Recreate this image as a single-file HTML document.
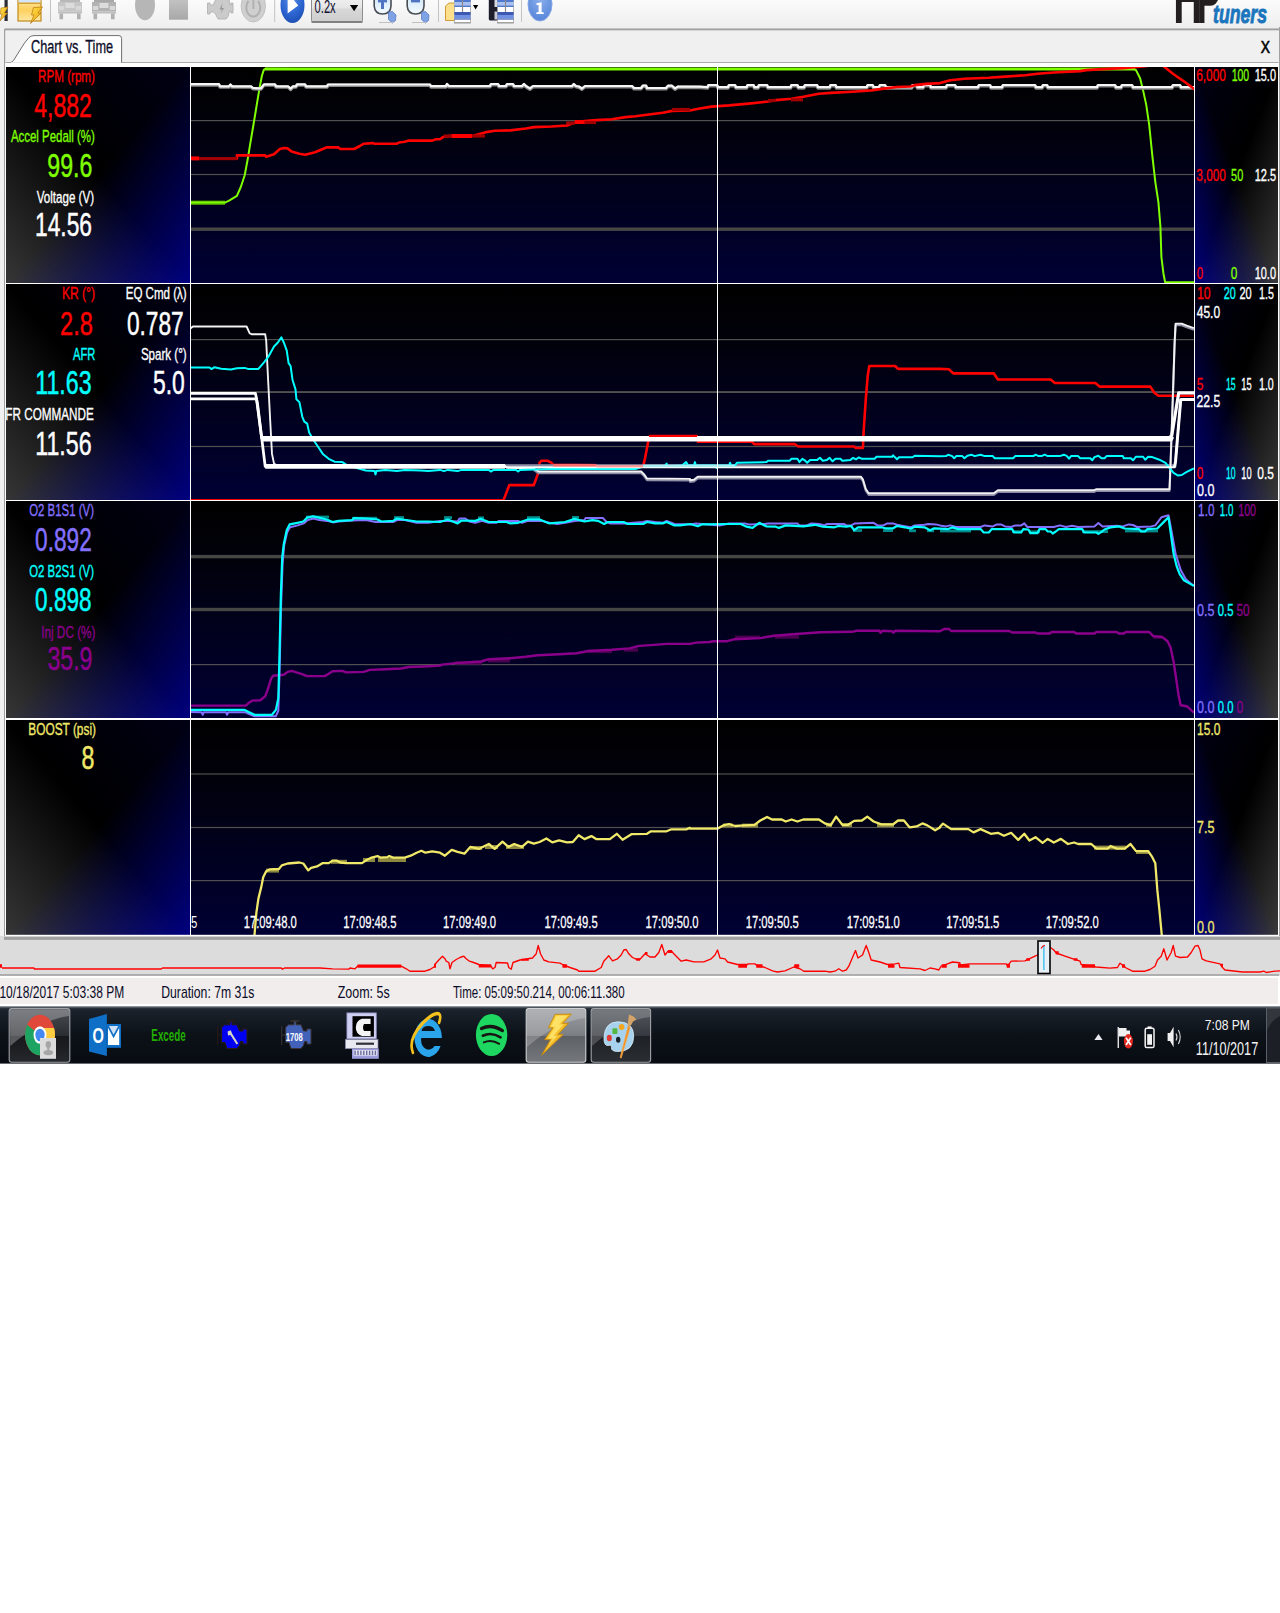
<!DOCTYPE html>
<html lang="en"><head><meta charset="utf-8"><title>HP Tuners VCM Scanner - Chart vs. Time</title>
<style>html,body{margin:0;padding:0;background:#fff}body{width:1280px;height:1613px;overflow:hidden}svg{display:block;font-family:"Liberation Sans",Arial,sans-serif}text{white-space:pre}</style></head>
<body>
<svg width="1280" height="1613" viewBox="0 0 1280 1613">
<defs>
<linearGradient id="gp" x1="0" y1="0" x2="0" y2="1"><stop offset="0" stop-color="#000"/><stop offset="0.25" stop-color="#01010a"/><stop offset="1" stop-color="#000034"/></linearGradient>
<linearGradient id="hb" x1="0" y1="0" x2="1" y2="0"><stop offset="0" stop-color="#343434"/><stop offset="0.35" stop-color="#20203a"/><stop offset="0.7" stop-color="#08085e"/><stop offset="1" stop-color="#000080"/></linearGradient>
<linearGradient id="hb2" x1="1" y1="0" x2="0" y2="0"><stop offset="0" stop-color="#383838"/><stop offset="0.35" stop-color="#20203a"/><stop offset="0.7" stop-color="#08085e"/><stop offset="1" stop-color="#00007c"/></linearGradient>
<linearGradient id="vt" x1="0" y1="0" x2="0" y2="1"><stop offset="0" stop-color="#00000a" stop-opacity="1"/><stop offset="0.5" stop-color="#000008" stop-opacity="0.55"/><stop offset="1" stop-color="#000008" stop-opacity="0"/></linearGradient>
<radialGradient id="cd" cx="0.47" cy="0.42" r="0.66"><stop offset="0" stop-color="#000" stop-opacity="1"/><stop offset="0.18" stop-color="#000" stop-opacity="0.96"/><stop offset="1" stop-color="#000" stop-opacity="0"/></radialGradient>
<radialGradient id="cd2" cx="0.53" cy="0.42" r="0.66"><stop offset="0" stop-color="#000" stop-opacity="1"/><stop offset="0.18" stop-color="#000" stop-opacity="0.96"/><stop offset="1" stop-color="#000" stop-opacity="0"/></radialGradient>
<clipPath id="cp1"><rect x="191" y="67" width="1003" height="216"/></clipPath>
<clipPath id="cp2"><rect x="191" y="284" width="1003" height="216.5"/></clipPath>
<clipPath id="cp3"><rect x="191" y="501" width="1003" height="217"/></clipPath>
<clipPath id="cp4"><rect x="191" y="720" width="1003" height="215.5"/></clipPath>
<clipPath id="cpl"><rect x="6" y="67" width="184" height="869"/></clipPath>
</defs>
<defs>
<linearGradient id="tb" x1="0" y1="0" x2="0" y2="1"><stop offset="0" stop-color="#fbfbfb"/><stop offset="1" stop-color="#eeeeee"/></linearGradient>
<linearGradient id="fold" x1="0" y1="0" x2="0" y2="1"><stop offset="0" stop-color="#ffe9a6"/><stop offset="0.55" stop-color="#ffd15e"/><stop offset="1" stop-color="#ffe7a4"/></linearGradient>
<linearGradient id="bolt" x1="0" y1="0" x2="1" y2="1"><stop offset="0" stop-color="#ffe24a"/><stop offset="1" stop-color="#e89c10"/></linearGradient>
<linearGradient id="gry" x1="0" y1="0" x2="0" y2="1"><stop offset="0" stop-color="#c4c4c4"/><stop offset="1" stop-color="#a8a8a8"/></linearGradient>
<radialGradient id="play" cx="0.45" cy="0.3" r="0.8"><stop offset="0" stop-color="#5a8ee8"/><stop offset="0.6" stop-color="#2a62cf"/><stop offset="1" stop-color="#1b49a8"/></radialGradient>
<linearGradient id="dd" x1="0" y1="0" x2="0" y2="1"><stop offset="0" stop-color="#f2f2f2"/><stop offset="0.45" stop-color="#e6e6e6"/><stop offset="0.5" stop-color="#d8d8d8"/><stop offset="1" stop-color="#cdcdcd"/></linearGradient>
<linearGradient id="glass" x1="0" y1="0" x2="0" y2="1"><stop offset="0" stop-color="#cfe6fb"/><stop offset="1" stop-color="#f4fbff"/></linearGradient>
<radialGradient id="info" cx="0.5" cy="0.3" r="0.8"><stop offset="0" stop-color="#8fb2ee"/><stop offset="1" stop-color="#4f7fd6"/></radialGradient>
<linearGradient id="tk" x1="0" y1="0" x2="0" y2="1"><stop offset="0" stop-color="#3a424c"/><stop offset="0.06" stop-color="#1b222b"/><stop offset="0.5" stop-color="#0c1118"/><stop offset="1" stop-color="#080c12"/></linearGradient>
<linearGradient id="btn" x1="0" y1="0" x2="0" y2="1"><stop offset="0" stop-color="#4a4e54"/><stop offset="0.5" stop-color="#2a2d31"/><stop offset="0.52" stop-color="#16181b"/><stop offset="1" stop-color="#25282c"/></linearGradient>
<linearGradient id="btn2" x1="0" y1="0" x2="0" y2="1"><stop offset="0" stop-color="#9a9da2"/><stop offset="0.5" stop-color="#7c7f84"/><stop offset="0.52" stop-color="#5e6166"/><stop offset="1" stop-color="#74777c"/></linearGradient>
<linearGradient id="btn3" x1="0" y1="0" x2="0" y2="1"><stop offset="0" stop-color="#565a60"/><stop offset="0.5" stop-color="#363a40"/><stop offset="0.52" stop-color="#1e2126"/><stop offset="1" stop-color="#2a2d32"/></linearGradient>
<clipPath id="cptb"><rect x="0" y="0" width="1280" height="28"/></clipPath>
</defs>
<rect x="0.00" y="0.00" width="1280.00" height="1613.00" fill="#fff" />
<g id="toolbar"><rect x="0.00" y="0.00" width="1280.00" height="28.50" fill="url(#tb)" />
<g clip-path="url(#cptb)">
<rect x="4.50" y="-2.00" width="3.20" height="23.00" fill="#2c2c34" />
<path d="M1 8 L8 7 L4.5 13 L7.5 13 L0 21 L2 14 L0 14 Z" fill="url(#bolt)" stroke="#b37408" stroke-width="0.6"/>
<rect x="18.00" y="-3.00" width="23.00" height="24.00" fill="url(#fold)" stroke="#c08a1c" stroke-width="1.2"/>
<rect x="18.60" y="-3.00" width="21.80" height="5.60" fill="#d6e6fa" />
<rect x="18.60" y="2.60" width="21.80" height="1.20" fill="#c89428" />
<path d="M33.5 7.5 L42.5 7 L38 13 L41 13 L30.5 23.5 L34 15 L31.5 15 Z" fill="url(#bolt)" stroke="#b37408" stroke-width="0.7"/>
<rect x="50.00" y="0.00" width="1.00" height="22.00" fill="#c4c4c4" />
<rect x="60.00" y="-2.00" width="20.00" height="4.00" fill="#b8b8b8" />
<rect x="58.00" y="2.00" width="24.00" height="9.50" fill="#c6c6c6" />
<rect x="65.50" y="3.00" width="9.00" height="5.00" fill="#dcdcdc" />
<rect x="58.80" y="6.00" width="5.50" height="4.00" fill="#d8d8d8" />
<rect x="75.70" y="6.00" width="5.50" height="4.00" fill="#d8d8d8" />
<rect x="58.00" y="11.50" width="24.00" height="2.00" fill="#bdbdbd" />
<rect x="59.50" y="13.50" width="3.60" height="5.80" fill="#b0b0b0" />
<rect x="77.00" y="13.50" width="3.60" height="5.80" fill="#b0b0b0" />
<rect x="94.00" y="-2.00" width="20.00" height="4.00" fill="#a8a8a8" />
<rect x="92.00" y="2.00" width="24.00" height="9.50" fill="#b2b2b2" />
<rect x="99.50" y="3.00" width="9.00" height="5.00" fill="#dcdcdc" />
<rect x="92.80" y="6.00" width="5.50" height="4.00" fill="#d8d8d8" />
<rect x="109.70" y="6.00" width="5.50" height="4.00" fill="#d8d8d8" />
<rect x="92.00" y="11.50" width="24.00" height="2.00" fill="#bdbdbd" />
<rect x="93.50" y="13.50" width="3.60" height="5.80" fill="#b0b0b0" />
<rect x="111.00" y="13.50" width="3.60" height="5.80" fill="#b0b0b0" />
<ellipse cx="145" cy="5" rx="10" ry="15.3" fill="#b6b6b6"/>
<rect x="169.00" y="-2.00" width="19.00" height="21.70" fill="url(#gry)" />
<path d="M207.5 3 L210 3 L210 5 L213 5 L216 -1 L229 -1 L230 5 L231 5 L231 3 L233 3 L233 13 L231 13 L231 11 L229.5 11 L228 16.5 L226 19 L218 19 L215.5 14 L213.5 12 L210 12 L210 14 L207.5 14 Z" fill="#cbcbcb" stroke="#adadad" stroke-width="0.8"/>
<path d="M222.5 3 L219.5 9.5 L222 9.5 L220.5 14 L224 8 L221.8 8 Z" fill="#9a9a9a"/>
<ellipse cx="253.3" cy="6" rx="12.2" ry="16" fill="#cfcfcf" stroke="#bdbdbd" stroke-width="0.8"/>
<path d="M248.5 1 A7 9 0 1 0 258 1" fill="none" stroke="#b0b0b0" stroke-width="2"/>
<rect x="252.50" y="-3.00" width="1.80" height="12.00" fill="#b0b0b0" />
<rect x="274.20" y="0.00" width="1.00" height="22.00" fill="#c4c4c4" />
<ellipse cx="292.5" cy="5" rx="12" ry="18" fill="url(#play)"/>
<path d="M287.6 -8 L298.2 5.5 L287.6 13.5 Z" fill="#fff"/>
<rect x="311.50" y="-4.00" width="51.00" height="26.00" fill="url(#dd)" stroke="#8e8e8e" stroke-width="1" rx="1.5"/>
<rect x="311.50" y="21.30" width="51.00" height="1.40" fill="#6a6a6a" />
<text transform="translate(314.55 12.50) scale(0.6230 1)" font-size="17.97" fill="#101030">0.2x</text>
<path d="M350 5 L358.2 5 L354.1 11.2 Z" fill="#000"/>
<path d="M374.2 -4 L374.2 6 Q374.8 14 382.6 14 Q390.6 14 391.0 6 L391.0 -4 Z" fill="url(#glass)" stroke="#4a4e54" stroke-width="1.6"/>
<rect x="378.00" y="-2.00" width="9.00" height="4.40" fill="#4f74c4" />
<rect x="381.00" y="2.00" width="3.00" height="7.00" fill="#4f74c4" />
<path d="M388.5 12 L392.5 11.5 L396.0 15 L395.5 20.5 L392.5 23 L388.5 19.5 Z" fill="#7fa2e4" stroke="#4f74c4" stroke-width="0.7"/>
<rect x="379.00" y="22.00" width="15.00" height="1.00" fill="#c0c0c0" />
<path d="M407.2 -4 L407.2 6 Q407.8 14 415.6 14 Q423.6 14 424.0 6 L424.0 -4 Z" fill="url(#glass)" stroke="#4a4e54" stroke-width="1.6"/>
<rect x="411.00" y="-2.00" width="9.00" height="4.40" fill="#4f74c4" />
<path d="M421.5 12 L425.5 11.5 L429.0 15 L428.5 20.5 L425.5 23 L421.5 19.5 Z" fill="#7fa2e4" stroke="#4f74c4" stroke-width="0.7"/>
<rect x="412.00" y="22.00" width="15.00" height="1.00" fill="#c0c0c0" />
<rect x="438.00" y="0.00" width="1.00" height="22.00" fill="#c4c4c4" />
<path d="M445.5 20.5 L445.5 6 L449 3 L456 3 L456 20.5 Z" fill="#ffdf8c" stroke="#c89428" stroke-width="0.9"/>
<rect x="454.40" y="-3.00" width="16.20" height="26.00" fill="#fff" stroke="#8a8a92" stroke-width="0.6"/>
<rect x="454.40" y="-3.00" width="16.20" height="5.00" fill="#4f78d0" />
<rect x="454.40" y="2.00" width="16.20" height="3.40" fill="#a9c0ee" />
<rect x="454.40" y="5.40" width="16.20" height="1.60" fill="#4f78d0" />
<rect x="454.40" y="12.00" width="16.20" height="3.00" fill="#3c58b0" />
<rect x="454.40" y="15.00" width="16.20" height="3.60" fill="#6f8fe0" />
<rect x="454.40" y="18.60" width="16.20" height="1.00" fill="#3c58b0" />
<rect x="461.90" y="-3.00" width="1.20" height="15.00" fill="#8a8a92" />
<rect x="454.40" y="22.30" width="16.20" height="0.90" fill="#8a8a8a" />
<path d="M473 5 L478.2 5 L475.6 9.6 Z" fill="#000"/>
<rect x="488.80" y="-3.00" width="9.00" height="23.50" fill="#1c1e2c" rx="1.5"/>
<rect x="494.50" y="-2.00" width="3.00" height="9.00" fill="#d8d8e0" />
<rect x="494.50" y="11.50" width="3.00" height="8.00" fill="#c8c8d4" />
<rect x="497.40" y="-3.00" width="16.20" height="26.00" fill="#fff" stroke="#8a8a92" stroke-width="0.6"/>
<rect x="497.40" y="-3.00" width="16.20" height="5.00" fill="#4f78d0" />
<rect x="497.40" y="2.00" width="16.20" height="3.40" fill="#a9c0ee" />
<rect x="497.40" y="5.40" width="16.20" height="1.60" fill="#4f78d0" />
<rect x="497.40" y="12.00" width="16.20" height="3.00" fill="#3c58b0" />
<rect x="497.40" y="15.00" width="16.20" height="3.60" fill="#6f8fe0" />
<rect x="497.40" y="18.60" width="16.20" height="1.00" fill="#3c58b0" />
<rect x="504.90" y="-3.00" width="1.20" height="15.00" fill="#8a8a92" />
<rect x="497.40" y="22.30" width="16.20" height="0.90" fill="#8a8a8a" />
<rect x="521.00" y="0.00" width="1.00" height="22.00" fill="#c4c4c4" />
<ellipse cx="540" cy="4" rx="12" ry="17" fill="url(#info)" stroke="#86a6e6" stroke-width="1"/>
<path d="M536.5 3.2 L541.6 2.2 L541.6 12 L543.8 12.6 L543.8 14 L536.3 14 L536.3 12.6 L538.6 12 L538.6 5 L536.5 5 Z" fill="#fff"/>
<text transform="translate(1173.29 23.40) scale(0.5657 1)" font-size="71.01" fill="#231f20" font-weight="bold">H</text>
<text transform="translate(1196.83 23.40) scale(0.5139 1)" font-size="71.01" fill="#231f20" font-weight="bold">P</text>
<text transform="translate(1213.00 23.00) scale(0.6790 1)" font-size="26.09" fill="#1b75bc" font-weight="bold" font-style="italic" stroke="#1b75bc" stroke-width="0.9">tuners</text>
</g>
<rect x="4.40" y="28.40" width="1276.00" height="2.20" fill="#a0a0a0" /></g>
<g id="tabs"><rect x="0.00" y="30.60" width="1280.00" height="36.00" fill="#f0f0f0" />
<rect x="0.00" y="28.40" width="4.40" height="911.00" fill="#f0f0f0" />
<rect x="4.00" y="29.00" width="1.20" height="910.00" fill="#a0a0a0" />
<rect x="1279.00" y="27.00" width="1.00" height="913.00" fill="#a0a0a0" />
<rect x="5.50" y="62.80" width="1273.10" height="4.20" fill="#fff" />
<rect x="5.50" y="62.00" width="1273.10" height="0.90" fill="#8c8c8c" />
<path d="M10.5 62.9 L13.5 60.5 L24.5 43 L29 37.6 Q31 35.6 34 35.6 L119 35.6 Q121.6 35.6 121.6 38.5 L121.6 62.9 Z" fill="#fff" stroke="#6e6e6e" stroke-width="1"/>
<rect x="11.00" y="62.30" width="110.00" height="1.60" fill="#fff" />
<text transform="translate(30.96 52.50) scale(0.7214 1)" font-size="17.68" fill="#0c0c28" stroke="#0c0c28" stroke-width="0.3">Chart vs. Time</text>
<text transform="translate(1260.85 52.70) scale(0.8251 1)" font-size="16.81" fill="#000" stroke="#000" stroke-width="0.6">X</text></g>
<g id="chart">
<defs><linearGradient id="pgBBL363636100" x1="0" y1="1" x2="0.8" y2="0.6"><stop offset="0" stop-color="#363636" stop-opacity="1"/><stop offset="1" stop-color="#363636" stop-opacity="0"/></linearGradient><linearGradient id="pgLBL363636100" x1="0" y1="1" x2="0.4" y2="0.2"><stop offset="0" stop-color="#363636" stop-opacity="1"/><stop offset="1" stop-color="#363636" stop-opacity="0"/></linearGradient><linearGradient id="pgTTR000014100" x1="1" y1="0" x2="0.2" y2="0.4"><stop offset="0" stop-color="#000014" stop-opacity="1"/><stop offset="1" stop-color="#000014" stop-opacity="0"/></linearGradient><linearGradient id="pgRTR000014100" x1="1" y1="0" x2="0.6" y2="0.8"><stop offset="0" stop-color="#000014" stop-opacity="1"/><stop offset="1" stop-color="#000014" stop-opacity="0"/></linearGradient><linearGradient id="pgRBR0000ff50" x1="1" y1="1" x2="0.6" y2="0.2"><stop offset="0" stop-color="#0000ff" stop-opacity="0.5"/><stop offset="1" stop-color="#0000ff" stop-opacity="0"/></linearGradient><linearGradient id="pgBBR0000ff50" x1="1" y1="1" x2="0.2" y2="0.6"><stop offset="0" stop-color="#0000ff" stop-opacity="0.5"/><stop offset="1" stop-color="#0000ff" stop-opacity="0"/></linearGradient><linearGradient id="pgRBR3a3a3a100" x1="1" y1="1" x2="0.6" y2="0.2"><stop offset="0" stop-color="#3a3a3a" stop-opacity="1"/><stop offset="1" stop-color="#3a3a3a" stop-opacity="0"/></linearGradient><linearGradient id="pgBBR3a3a3a100" x1="1" y1="1" x2="0.2" y2="0.6"><stop offset="0" stop-color="#3a3a3a" stop-opacity="1"/><stop offset="1" stop-color="#3a3a3a" stop-opacity="0"/></linearGradient><linearGradient id="pgTTL000014100" x1="0" y1="0" x2="0.8" y2="0.4"><stop offset="0" stop-color="#000014" stop-opacity="1"/><stop offset="1" stop-color="#000014" stop-opacity="0"/></linearGradient><linearGradient id="pgLTL000014100" x1="0" y1="0" x2="0.4" y2="0.8"><stop offset="0" stop-color="#000014" stop-opacity="1"/><stop offset="1" stop-color="#000014" stop-opacity="0"/></linearGradient><linearGradient id="pgBBL0000ff48" x1="0" y1="1" x2="0.8" y2="0.6"><stop offset="0" stop-color="#0000ff" stop-opacity="0.48"/><stop offset="1" stop-color="#0000ff" stop-opacity="0"/></linearGradient><linearGradient id="pgLBL0000ff48" x1="0" y1="1" x2="0.4" y2="0.2"><stop offset="0" stop-color="#0000ff" stop-opacity="0.48"/><stop offset="1" stop-color="#0000ff" stop-opacity="0"/></linearGradient></defs>
<rect x="5.20" y="62.80" width="1273.80" height="874.00" fill="#fff" />
<rect x="6.00" y="67.00" width="1272.00" height="869.00" fill="#000" />
<rect x="6.00" y="67.00" width="184.00" height="216.00" fill="#000" />
<polygon points="98.00,175.00 6.00,283.00 190.00,283.00" fill="url(#pgBBL363636100)" shape-rendering="crispEdges"/>
<polygon points="98.00,175.00 6.00,67.00 6.00,283.00" fill="url(#pgLBL363636100)" shape-rendering="crispEdges"/>
<polygon points="98.00,175.00 6.00,67.00 190.00,67.00" fill="url(#pgTTR000014100)" shape-rendering="crispEdges"/>
<polygon points="98.00,175.00 190.00,67.00 190.00,283.00" fill="url(#pgRTR000014100)" shape-rendering="crispEdges"/>
<polygon points="98.00,175.00 190.00,67.00 190.00,283.00" fill="url(#pgRBR0000ff50)" shape-rendering="crispEdges"/>
<polygon points="98.00,175.00 6.00,283.00 190.00,283.00" fill="url(#pgBBR0000ff50)" shape-rendering="crispEdges"/>
<rect x="191.00" y="67.00" width="1003.00" height="216.00" fill="url(#gp)" />
<rect x="1195.00" y="67.00" width="83.00" height="216.00" fill="#000" />
<polygon points="1236.50,175.00 1278.00,67.00 1278.00,283.00" fill="url(#pgRBR3a3a3a100)" shape-rendering="crispEdges"/>
<polygon points="1236.50,175.00 1195.00,283.00 1278.00,283.00" fill="url(#pgBBR3a3a3a100)" shape-rendering="crispEdges"/>
<polygon points="1236.50,175.00 1195.00,67.00 1278.00,67.00" fill="url(#pgTTL000014100)" shape-rendering="crispEdges"/>
<polygon points="1236.50,175.00 1195.00,67.00 1195.00,283.00" fill="url(#pgLTL000014100)" shape-rendering="crispEdges"/>
<polygon points="1236.50,175.00 1195.00,283.00 1278.00,283.00" fill="url(#pgBBL0000ff48)" shape-rendering="crispEdges"/>
<polygon points="1236.50,175.00 1195.00,67.00 1195.00,283.00" fill="url(#pgLBL0000ff48)" shape-rendering="crispEdges"/>
<rect x="6.00" y="284.00" width="184.00" height="216.00" fill="#000" />
<polygon points="98.00,392.00 6.00,500.00 190.00,500.00" fill="url(#pgBBL363636100)" shape-rendering="crispEdges"/>
<polygon points="98.00,392.00 6.00,284.00 6.00,500.00" fill="url(#pgLBL363636100)" shape-rendering="crispEdges"/>
<polygon points="98.00,392.00 6.00,284.00 190.00,284.00" fill="url(#pgTTR000014100)" shape-rendering="crispEdges"/>
<polygon points="98.00,392.00 190.00,284.00 190.00,500.00" fill="url(#pgRTR000014100)" shape-rendering="crispEdges"/>
<polygon points="98.00,392.00 190.00,284.00 190.00,500.00" fill="url(#pgRBR0000ff50)" shape-rendering="crispEdges"/>
<polygon points="98.00,392.00 6.00,500.00 190.00,500.00" fill="url(#pgBBR0000ff50)" shape-rendering="crispEdges"/>
<rect x="191.00" y="284.00" width="1003.00" height="216.00" fill="url(#gp)" />
<rect x="1195.00" y="284.00" width="83.00" height="216.00" fill="#000" />
<polygon points="1236.50,392.00 1278.00,284.00 1278.00,500.00" fill="url(#pgRBR3a3a3a100)" shape-rendering="crispEdges"/>
<polygon points="1236.50,392.00 1195.00,500.00 1278.00,500.00" fill="url(#pgBBR3a3a3a100)" shape-rendering="crispEdges"/>
<polygon points="1236.50,392.00 1195.00,284.00 1278.00,284.00" fill="url(#pgTTL000014100)" shape-rendering="crispEdges"/>
<polygon points="1236.50,392.00 1195.00,284.00 1195.00,500.00" fill="url(#pgLTL000014100)" shape-rendering="crispEdges"/>
<polygon points="1236.50,392.00 1195.00,500.00 1278.00,500.00" fill="url(#pgBBL0000ff48)" shape-rendering="crispEdges"/>
<polygon points="1236.50,392.00 1195.00,284.00 1195.00,500.00" fill="url(#pgLBL0000ff48)" shape-rendering="crispEdges"/>
<rect x="6.00" y="501.00" width="184.00" height="217.00" fill="#000" />
<polygon points="98.00,609.50 6.00,718.00 190.00,718.00" fill="url(#pgBBL363636100)" shape-rendering="crispEdges"/>
<polygon points="98.00,609.50 6.00,501.00 6.00,718.00" fill="url(#pgLBL363636100)" shape-rendering="crispEdges"/>
<polygon points="98.00,609.50 6.00,501.00 190.00,501.00" fill="url(#pgTTR000014100)" shape-rendering="crispEdges"/>
<polygon points="98.00,609.50 190.00,501.00 190.00,718.00" fill="url(#pgRTR000014100)" shape-rendering="crispEdges"/>
<polygon points="98.00,609.50 190.00,501.00 190.00,718.00" fill="url(#pgRBR0000ff50)" shape-rendering="crispEdges"/>
<polygon points="98.00,609.50 6.00,718.00 190.00,718.00" fill="url(#pgBBR0000ff50)" shape-rendering="crispEdges"/>
<rect x="191.00" y="501.00" width="1003.00" height="217.00" fill="url(#gp)" />
<rect x="1195.00" y="501.00" width="83.00" height="217.00" fill="#000" />
<polygon points="1236.50,609.50 1278.00,501.00 1278.00,718.00" fill="url(#pgRBR3a3a3a100)" shape-rendering="crispEdges"/>
<polygon points="1236.50,609.50 1195.00,718.00 1278.00,718.00" fill="url(#pgBBR3a3a3a100)" shape-rendering="crispEdges"/>
<polygon points="1236.50,609.50 1195.00,501.00 1278.00,501.00" fill="url(#pgTTL000014100)" shape-rendering="crispEdges"/>
<polygon points="1236.50,609.50 1195.00,501.00 1195.00,718.00" fill="url(#pgLTL000014100)" shape-rendering="crispEdges"/>
<polygon points="1236.50,609.50 1195.00,718.00 1278.00,718.00" fill="url(#pgBBL0000ff48)" shape-rendering="crispEdges"/>
<polygon points="1236.50,609.50 1195.00,501.00 1195.00,718.00" fill="url(#pgLBL0000ff48)" shape-rendering="crispEdges"/>
<rect x="6.00" y="720.00" width="184.00" height="215.00" fill="#000" />
<polygon points="98.00,827.50 6.00,935.00 190.00,935.00" fill="url(#pgBBL363636100)" shape-rendering="crispEdges"/>
<polygon points="98.00,827.50 6.00,720.00 6.00,935.00" fill="url(#pgLBL363636100)" shape-rendering="crispEdges"/>
<polygon points="98.00,827.50 6.00,720.00 190.00,720.00" fill="url(#pgTTR000014100)" shape-rendering="crispEdges"/>
<polygon points="98.00,827.50 190.00,720.00 190.00,935.00" fill="url(#pgRTR000014100)" shape-rendering="crispEdges"/>
<polygon points="98.00,827.50 190.00,720.00 190.00,935.00" fill="url(#pgRBR0000ff50)" shape-rendering="crispEdges"/>
<polygon points="98.00,827.50 6.00,935.00 190.00,935.00" fill="url(#pgBBR0000ff50)" shape-rendering="crispEdges"/>
<rect x="191.00" y="720.00" width="1003.00" height="215.00" fill="url(#gp)" />
<rect x="1195.00" y="720.00" width="83.00" height="215.00" fill="#000" />
<polygon points="1236.50,827.50 1278.00,720.00 1278.00,935.00" fill="url(#pgRBR3a3a3a100)" shape-rendering="crispEdges"/>
<polygon points="1236.50,827.50 1195.00,935.00 1278.00,935.00" fill="url(#pgBBR3a3a3a100)" shape-rendering="crispEdges"/>
<polygon points="1236.50,827.50 1195.00,720.00 1278.00,720.00" fill="url(#pgTTL000014100)" shape-rendering="crispEdges"/>
<polygon points="1236.50,827.50 1195.00,720.00 1195.00,935.00" fill="url(#pgLTL000014100)" shape-rendering="crispEdges"/>
<polygon points="1236.50,827.50 1195.00,935.00 1278.00,935.00" fill="url(#pgBBL0000ff48)" shape-rendering="crispEdges"/>
<polygon points="1236.50,827.50 1195.00,720.00 1195.00,935.00" fill="url(#pgLBL0000ff48)" shape-rendering="crispEdges"/>
<rect x="191.00" y="120.00" width="1003.00" height="1.20" fill="#505050" />
<rect x="191.00" y="173.90" width="1003.00" height="1.20" fill="#505050" />
<rect x="191.00" y="339.00" width="1003.00" height="1.20" fill="#505050" />
<rect x="191.00" y="445.90" width="1003.00" height="1.20" fill="#505050" />
<rect x="191.00" y="664.00" width="1003.00" height="1.20" fill="#505050" />
<rect x="191.00" y="773.40" width="1003.00" height="1.20" fill="#505050" />
<rect x="191.00" y="826.90" width="1003.00" height="1.20" fill="#505050" />
<rect x="191.00" y="880.00" width="1003.00" height="1.20" fill="#505050" />
<rect x="191.00" y="391.20" width="1003.00" height="1.70" fill="#5a5a5a" />
<rect x="191.00" y="227.50" width="1003.00" height="3.40" fill="#464644" />
<rect x="191.00" y="554.90" width="1003.00" height="3.40" fill="#464644" />
<rect x="191.00" y="607.80" width="1003.00" height="3.40" fill="#464644" />
<g clip-path="url(#cp1)">
<rect x="191.00" y="200.60" width="34.00" height="4.30" fill="#4f9c00" />
<rect x="265.00" y="67.20" width="870.00" height="3.60" fill="#4f9c00" />
<polyline points="191.0,202.6 225.0,202.6 229.1,200.7 236.9,195.8 240.8,187.0 244.7,175.3 247.6,159.7 250.5,142.1 253.5,124.5 256.4,107.0 259.3,89.4 261.9,75.7 263.8,69.9 265.4,68.7 300.0,68.9 1134.0,68.9 1136.0,70.1 1140.1,78.2 1143.1,90.4 1146.2,104.6 1149.2,124.9 1152.3,155.4 1155.3,181.8 1158.4,202.1 1160.4,226.5 1161.4,257.0 1163.4,273.2 1165.1,282.2 1166.0,282.2 1194.0,282.2" fill="none" stroke="#7fff00" stroke-width="2.0" stroke-linejoin="round" />
<polyline points="191.0,85.0 219.0,85.0 220.0,87.1 229.0,87.1 230.5,85.3 232.0,87.1 251.0,87.1 253.0,88.8 261.0,89.1 264.0,85.1 275.0,85.1 276.0,87.1 288.0,87.1 290.6,89.4 293.0,87.1 296.0,87.1 297.0,85.1 305.0,85.1 306.0,87.1 327.0,87.1 328.0,85.3 430.0,85.3 431.0,87.0 446.0,87.0 447.0,84.8 449.0,86.8 490.0,86.8 491.0,84.8 498.0,84.8 499.0,86.8 506.0,86.8 507.0,84.8 513.0,84.8 514.0,86.8 522.0,86.8 524.0,84.8 526.0,86.8 530.0,89.2 533.0,86.8 572.0,86.8 573.8,84.8 576.0,86.8 579.0,87.3 582.0,89.3 585.0,86.8 632.0,86.8 634.0,88.8 641.0,88.8 643.0,86.3 646.0,86.3 647.0,88.8 666.0,88.8 668.0,86.5 672.0,86.5 675.0,89.2 678.0,87.3 700.0,87.5 707.5,88.0 708.5,85.8 717.0,85.8 718.0,88.0 728.0,88.0 729.0,85.8 735.0,85.8 736.0,88.0 746.6,88.0 747.6,85.8 753.5,85.8 754.5,88.0 758.0,88.0 759.0,85.8 767.0,85.8 768.0,88.0 790.5,88.0 791.5,85.8 797.4,85.8 798.4,88.0 804.0,88.0 805.0,85.8 817.0,85.8 818.0,88.0 829.6,88.0 830.6,85.8 835.5,85.8 836.5,88.0 866.7,88.0 867.7,85.8 872.6,85.8 873.6,88.0 879.0,88.0 880.0,85.8 885.0,85.8 886.0,88.0 911.6,88.0 912.6,85.8 916.5,85.8 917.5,88.0 923.0,88.0 924.0,85.8 930.0,85.8 931.0,88.0 946.0,88.0 947.0,85.8 955.0,85.8 956.0,88.0 978.0,88.0 979.0,85.8 990.0,85.8 991.0,88.0 1002.0,88.0 1003.0,85.8 1035.0,85.8 1036.0,88.0 1042.0,88.0 1043.0,85.8 1047.0,85.8 1048.0,88.0 1097.0,88.0 1098.0,85.8 1115.0,85.8 1116.0,88.0 1121.0,88.0 1122.0,85.8 1132.0,85.8 1133.0,88.0 1172.0,88.0 1173.0,85.8 1180.0,85.8 1181.0,88.0 1194.0,88.0" fill="none" stroke="#8a8a8a" stroke-width="3.4" stroke-linejoin="round" />
<polyline points="191.0,84.2 219.0,84.2 220.0,86.3 229.0,86.3 230.5,84.5 232.0,86.3 251.0,86.3 253.0,88.0 261.0,88.3 264.0,84.3 275.0,84.3 276.0,86.3 288.0,86.3 290.6,88.6 293.0,86.3 296.0,86.3 297.0,84.3 305.0,84.3 306.0,86.3 327.0,86.3 328.0,84.5 430.0,84.5 431.0,86.2 446.0,86.2 447.0,84.0 449.0,86.0 490.0,86.0 491.0,84.0 498.0,84.0 499.0,86.0 506.0,86.0 507.0,84.0 513.0,84.0 514.0,86.0 522.0,86.0 524.0,84.0 526.0,86.0 530.0,88.4 533.0,86.0 572.0,86.0 573.8,84.0 576.0,86.0 579.0,86.5 582.0,88.5 585.0,86.0 632.0,86.0 634.0,88.0 641.0,88.0 643.0,85.5 646.0,85.5 647.0,88.0 666.0,88.0 668.0,85.7 672.0,85.7 675.0,88.4 678.0,86.5 700.0,86.7 707.5,87.2 708.5,85.0 717.0,85.0 718.0,87.2 728.0,87.2 729.0,85.0 735.0,85.0 736.0,87.2 746.6,87.2 747.6,85.0 753.5,85.0 754.5,87.2 758.0,87.2 759.0,85.0 767.0,85.0 768.0,87.2 790.5,87.2 791.5,85.0 797.4,85.0 798.4,87.2 804.0,87.2 805.0,85.0 817.0,85.0 818.0,87.2 829.6,87.2 830.6,85.0 835.5,85.0 836.5,87.2 866.7,87.2 867.7,85.0 872.6,85.0 873.6,87.2 879.0,87.2 880.0,85.0 885.0,85.0 886.0,87.2 911.6,87.2 912.6,85.0 916.5,85.0 917.5,87.2 923.0,87.2 924.0,85.0 930.0,85.0 931.0,87.2 946.0,87.2 947.0,85.0 955.0,85.0 956.0,87.2 978.0,87.2 979.0,85.0 990.0,85.0 991.0,87.2 1002.0,87.2 1003.0,85.0 1035.0,85.0 1036.0,87.2 1042.0,87.2 1043.0,85.0 1047.0,85.0 1048.0,87.2 1097.0,87.2 1098.0,85.0 1115.0,85.0 1116.0,87.2 1121.0,87.2 1122.0,85.0 1132.0,85.0 1133.0,87.2 1172.0,87.2 1173.0,85.0 1180.0,85.0 1181.0,87.2 1194.0,87.2" fill="none" stroke="#f6f6f6" stroke-width="2.2" stroke-linejoin="round" />
<polyline points="191.0,158.4 237.0,158.4 236.9,155.4 265.2,155.4 266.2,156.8 274.0,154.2 279.8,149.0 283.8,148.0 287.7,148.4 291.6,151.5 299.4,153.8 305.2,154.8 315.0,152.3 322.8,149.0 326.7,147.4 338.4,147.4 340.4,149.0 354.1,149.0 359.9,146.0 363.8,143.7 372.6,143.1 374.6,143.7 397.0,143.7 399.0,142.5 404.8,141.7 408.8,140.6 432.2,140.6 436.1,139.2 440.0,139.2 443.9,136.7 451.7,135.9 472.2,135.9 484.9,132.4 494.7,130.8 510.3,130.4 525.9,128.5 533.8,127.1 551.3,126.5 567.0,125.5 574.8,122.6 584.5,121.0 596.2,120.1 611.9,119.3 625.5,117.1 635.3,116.3 647.0,114.8 662.7,112.8 672.4,110.9 690.0,110.5 699.8,108.5 711.5,106.6 729.1,105.4 748.6,103.6 768.1,101.5 775.9,100.1 791.6,98.8 803.3,96.8 818.9,93.7 830.6,92.9 852.1,91.7 871.6,90.4 885.3,88.4 897.0,87.0 910.7,86.5 914.6,85.1 926.3,83.9 940.0,83.1 950.2,80.2 964.4,78.8 988.8,77.8 1005.0,76.6 1025.3,75.2 1037.5,73.8 1053.8,72.5 1080.2,71.1 1086.2,70.1 1102.5,69.1 1122.8,68.1 1143.1,66.4 1153.3,65.0" fill="none" stroke="#ff0000" stroke-width="2.6" stroke-linejoin="round" />
<polyline points="1162.4,65.0 1164.5,67.0 1173.6,74.2 1183.8,81.3 1192.9,88.0 1195.9,90.4" fill="none" stroke="#ff0000" stroke-width="2.6" stroke-linejoin="round" />
<rect x="199.00" y="157.00" width="38.00" height="3.20" fill="#a00000" />
<rect x="444.00" y="134.40" width="8.00" height="3.20" fill="#a00000" />
<rect x="472.00" y="134.40" width="13.00" height="3.20" fill="#a00000" />
<rect x="566.00" y="121.40" width="9.00" height="3.20" fill="#a00000" />
<rect x="584.00" y="120.90" width="12.00" height="3.20" fill="#a00000" />
<rect x="768.00" y="98.90" width="8.00" height="3.20" fill="#a00000" />
<rect x="791.00" y="98.20" width="12.00" height="3.20" fill="#a00000" />
<rect x="672.00" y="107.90" width="18.00" height="3.20" fill="#a00000" />
<rect x="191.00" y="156.40" width="8.00" height="4.00" fill="#ff0000" />
<rect x="451.70" y="134.00" width="20.30" height="4.00" fill="#ff0000" />
<rect x="574.80" y="120.00" width="9.70" height="4.00" fill="#ff0000" />
</g>
<g clip-path="url(#cp2)">
<polyline points="191.0,500.3 503.5,500.3 509.3,485.1 533.8,485.1 537.7,474.4 539.6,462.7 541.6,460.7 547.4,460.7 551.3,462.7 553.3,464.8 596.2,465.2 596.6,466.6 643.1,466.6 645.1,457.8 647.0,448.0 649.0,437.3 649.8,436.1 690.0,436.1 696.8,436.1 697.8,441.8 751.5,441.8 754.5,444.1 794.5,444.1 798.4,446.5 854.1,446.5 856.0,448.0 862.9,448.0 863.8,428.5 865.8,399.2 867.7,375.8 869.3,366.0 895.1,366.0 898.0,368.9 940.0,368.9 949.1,369.3 953.2,373.4 993.8,373.4 997.9,379.5 1050.7,379.5 1054.8,383.0 1095.4,383.0 1099.5,386.6 1150.2,386.6 1154.3,392.7 1158.4,395.8 1193.9,395.8" fill="none" stroke="#ff0000" stroke-width="2.6" stroke-linejoin="round" />
<rect x="505.00" y="464.20" width="669.00" height="2.40" fill="#8c8ca4" />
<polyline points="533.8,470.1 538.6,473.1 641.2,473.1 644.1,476.0 647.0,480.1 690.0,480.5 690.0,481.8 693.9,481.3 697.8,478.3 860.9,478.3 862.9,480.9 865.8,490.6 868.7,494.9 940.0,494.9 993.8,494.9 997.9,491.8 1094.4,491.8 1096.4,490.8 1169.5,490.8 1170.5,466.4 1172.6,405.5 1174.6,344.5 1175.6,325.2 1181.7,325.2 1186.8,327.3 1193.9,329.7" fill="none" stroke="#8c8ca4" stroke-width="2.2" stroke-linejoin="round" />
<polyline points="190.0,328.9 192.9,326.5 246.6,326.5 249.6,333.2 251.5,334.3 265.2,334.3 266.2,340.6 268.1,379.7 270.1,418.7 272.0,453.9 274.0,463.6 276.9,465.6 504.5,465.6 507.4,467.9 533.8,468.5 538.6,471.5 641.2,471.5 644.1,474.4 647.0,478.5 690.0,478.9 690.0,480.2 693.9,479.7 697.8,476.7 860.9,476.7 862.9,479.3 865.8,489.0 868.7,493.3 940.0,493.3 993.8,493.2 997.9,490.2 1094.4,490.2 1096.4,489.2 1169.5,489.2 1170.5,464.8 1172.6,403.9 1174.6,342.9 1175.6,323.6 1181.7,323.6 1186.8,325.7 1193.9,328.1" fill="none" stroke="#f2f2f2" stroke-width="1.9" stroke-linejoin="round" />
<polyline points="191.0,367.6 209.5,367.5 211.5,369.1 214.4,367.2 221.2,368.7 231.0,369.5 236.9,368.3 244.7,367.9 248.6,369.1 258.4,368.9 264.2,362.1 268.1,357.2 274.0,346.5 277.9,342.5 281.4,337.3 283.8,342.5 286.7,350.4 288.6,363.1 290.6,366.0 292.5,379.7 295.5,389.4 296.4,399.2 299.4,402.1 302.3,416.8 304.3,421.6 307.2,423.6 309.1,432.4 315.0,442.2 318.9,448.0 322.8,453.9 328.7,458.8 334.5,461.7 342.3,462.1 346.2,464.6 356.0,467.9 365.8,470.5 374.6,471.1 375.5,474.4 376.5,471.1 385.3,469.9 397.0,471.1 404.8,469.9 420.5,470.5 428.3,471.1 440.0,469.9 443.9,471.1 447.8,469.9 457.6,471.1 461.5,469.9 488.8,469.9 490.8,471.5 493.7,469.9 516.2,469.9 518.1,471.5 520.1,469.9 533.8,469.5 549.4,469.1 565.0,469.1 600.2,468.7 635.3,469.1 643.1,466.6 664.6,466.2 666.6,463.6 667.5,466.2 682.2,465.6 686.1,462.1 688.0,465.6 690.0,465.6 693.9,465.6 694.9,462.1 695.9,465.6 715.4,465.6 716.4,467.9 717.3,465.6 729.1,465.6 730.0,462.7 731.0,465.2 734.9,465.6 736.9,462.7 766.2,462.1 768.1,460.7 789.6,460.7 791.6,458.8 797.4,458.8 799.4,462.1 802.3,458.8 805.2,460.7 807.2,462.7 810.1,460.1 817.0,460.1 819.9,457.8 822.8,460.7 826.7,460.1 829.6,457.8 832.6,461.3 835.5,458.8 840.4,458.8 842.3,460.7 850.2,460.1 853.1,457.8 856.0,459.3 858.9,457.4 861.9,458.8 874.6,458.8 876.5,456.8 892.1,456.8 893.1,455.4 897.0,459.3 899.0,457.2 912.7,457.2 914.6,455.8 940.0,456.2 946.1,456.1 948.1,454.7 952.2,456.1 954.2,458.3 956.2,456.1 962.3,456.1 964.4,458.3 967.4,455.7 971.5,454.7 974.5,456.1 980.6,454.7 984.7,456.1 992.8,456.1 994.8,458.3 1013.1,458.3 1015.2,456.1 1033.4,456.1 1035.5,454.7 1038.5,456.1 1041.6,456.1 1044.6,454.7 1047.7,456.1 1059.8,456.1 1063.9,454.7 1067.0,456.1 1069.0,458.7 1071.0,456.1 1078.1,456.1 1080.2,458.3 1090.3,458.3 1092.3,460.3 1094.4,457.1 1098.4,455.7 1101.5,458.3 1104.5,458.3 1106.6,456.1 1122.8,456.1 1123.8,458.3 1130.9,458.3 1133.0,460.3 1136.0,456.7 1143.1,456.7 1145.2,459.7 1148.2,456.7 1152.3,457.1 1159.4,459.7 1165.5,462.8 1169.5,467.9 1173.6,472.9 1177.7,475.4 1181.7,475.0 1186.8,471.9 1193.9,468.5" fill="none" stroke="#00ffff" stroke-width="2.0" stroke-linejoin="round" />
<polyline points="191.0,398.8 256.4,398.8 257.5,404.0 265.2,466.4 505.0,466.4" fill="none" stroke="#fff" stroke-width="2.8" stroke-linejoin="round" />
<polyline points="265.2,466.4 505.0,466.4" fill="none" stroke="#fff" stroke-width="4.6" stroke-linejoin="round" />
<polyline points="505.0,466.4 506.0,467.3 1174.6,467.3 1175.6,460.7 1180.7,399.8 1182.0,399.4 1194.0,399.4" fill="none" stroke="#fff" stroke-width="2.0" stroke-linejoin="round" />
<polyline points="191.0,393.3 255.4,393.3 256.4,398.0 261.8,438.8" fill="none" stroke="#fff" stroke-width="2.8" stroke-linejoin="round" />
<polyline points="261.8,438.8 1170.5,438.8 1171.6,436.4" fill="none" stroke="#fff" stroke-width="5.4" stroke-linejoin="round" />
<polyline points="1171.6,436.4 1178.7,392.9 1194.0,392.9" fill="none" stroke="#fff" stroke-width="3.2" stroke-linejoin="round" />
<polyline points="1174.6,467.3 1175.6,460.7 1180.7,399.8 1182.0,399.4 1194.0,399.4" fill="none" stroke="#fff" stroke-width="3.0" stroke-linejoin="round" />
<rect x="553.30" y="463.90" width="43.00" height="2.60" fill="#ff6a6a" />
<rect x="596.25" y="465.20" width="47.00" height="2.20" fill="#ff9a9a" />
<rect x="649.00" y="435.60" width="48.00" height="1.40" fill="#ff0000" />
<rect x="643.00" y="464.60" width="92.00" height="2.60" fill="#a8ecf4" />
</g>
<g clip-path="url(#cp3)">
<rect x="306.00" y="515.60" width="23.00" height="2.80" fill="#008a8a" />
<rect x="352.00" y="516.80" width="25.00" height="2.80" fill="#008a8a" />
<rect x="394.00" y="516.10" width="10.00" height="2.80" fill="#008a8a" />
<rect x="444.00" y="516.20" width="8.00" height="2.80" fill="#008a8a" />
<rect x="478.00" y="516.40" width="6.00" height="2.80" fill="#008a8a" />
<rect x="527.00" y="516.20" width="13.00" height="2.80" fill="#008a8a" />
<rect x="572.00" y="516.00" width="7.00" height="2.80" fill="#008a8a" />
<rect x="853.00" y="529.10" width="9.00" height="2.80" fill="#008a8a" />
<rect x="883.00" y="529.20" width="10.00" height="2.80" fill="#008a8a" />
<rect x="909.00" y="529.40" width="7.00" height="2.80" fill="#008a8a" />
<rect x="927.00" y="529.40" width="7.00" height="2.80" fill="#008a8a" />
<rect x="940.00" y="529.60" width="31.00" height="2.80" fill="#008a8a" />
<rect x="1012.00" y="530.20" width="10.00" height="2.80" fill="#008a8a" />
<rect x="1029.00" y="530.40" width="11.00" height="2.80" fill="#008a8a" />
<rect x="1082.00" y="530.20" width="26.00" height="2.80" fill="#008a8a" />
<rect x="1125.00" y="529.60" width="33.00" height="2.80" fill="#008a8a" />
<rect x="455.00" y="661.30" width="27.00" height="3.40" fill="#4a0050" />
<rect x="488.00" y="659.10" width="22.00" height="3.40" fill="#4a0050" />
<rect x="588.00" y="649.70" width="24.00" height="3.40" fill="#4a0050" />
<rect x="624.00" y="648.30" width="14.00" height="3.40" fill="#4a0050" />
<rect x="735.00" y="635.60" width="25.00" height="3.40" fill="#4a0050" />
<rect x="775.00" y="635.30" width="24.00" height="3.40" fill="#4a0050" />
<rect x="1153.00" y="635.30" width="9.00" height="3.40" fill="#4a0050" />
<polyline points="191.0,705.6 245.7,705.6 248.6,703.1 252.5,700.6 260.3,700.2 265.2,696.3 268.1,688.5 271.1,678.7 273.0,675.8 283.8,674.8 287.7,671.9 291.6,670.9 296.4,672.4 301.3,673.8 307.2,676.1 324.8,676.1 328.7,673.8 332.6,671.3 342.3,670.9 346.2,672.4 363.8,671.9 369.7,669.9 385.3,669.3 400.9,668.5 408.8,667.0 428.3,666.2 440.0,665.6 442.0,664.6 455.6,663.1 481.0,661.5 488.8,659.2 510.3,658.2 525.9,656.8 537.7,655.2 559.1,654.3 576.7,653.3 588.4,651.0 611.9,649.8 629.5,648.4 639.2,645.9 650.9,645.1 666.6,643.9 690.0,643.9 695.9,642.6 709.5,642.0 713.4,641.2 727.1,641.2 734.9,639.2 760.3,638.1 774.0,635.7 799.4,633.8 820.9,632.2 852.1,631.8 856.0,630.8 879.5,630.8 880.4,632.8 882.4,630.8 892.1,631.2 893.5,632.8 895.1,630.8 940.0,631.2 944.1,629.0 949.1,629.0 951.2,631.0 1009.1,631.0 1012.1,632.5 1035.5,632.5 1037.5,633.5 1049.7,633.5 1051.7,632.0 1074.1,632.0 1076.1,633.5 1094.4,633.5 1096.4,632.0 1116.7,632.0 1118.8,633.5 1123.8,633.5 1125.9,632.0 1149.2,632.0 1153.3,636.1 1162.4,637.1 1167.5,641.2 1170.5,647.3 1173.6,661.5 1176.6,681.8 1178.7,696.0 1180.7,705.2 1186.8,706.2 1193.9,712.7" fill="none" stroke="#8b008b" stroke-width="2.4" stroke-linejoin="round" />
<polyline points="191.0,711.9 201.7,712.3 202.7,714.8 203.7,712.3 226.1,712.3 227.1,714.8 228.1,712.3 245.7,712.3 248.6,713.8 254.5,716.2 275.9,716.2 278.3,710.9 279.5,674.8 281.0,608.4 282.6,563.5 284.1,545.9 287.1,532.6 290.0,527.3 297.8,525.4 303.7,523.4 307.6,520.1 313.4,518.5 319.3,520.1 327.1,520.9 333.0,522.4 338.8,521.5 352.5,520.5 365.8,520.1 375.5,522.0 393.1,522.0 397.0,520.1 404.8,520.1 416.6,522.8 428.3,522.8 440.0,520.9 447.8,520.9 457.6,521.5 459.5,518.5 465.4,518.5 469.3,521.5 475.2,522.8 482.0,520.9 488.8,522.8 496.6,522.8 498.6,520.9 518.1,520.9 522.0,522.8 527.9,520.9 541.6,520.9 549.4,522.8 557.2,524.0 565.0,522.8 574.8,520.9 584.5,520.1 585.5,518.1 603.1,518.1 606.0,521.5 609.9,523.4 623.6,523.4 643.1,522.0 647.0,520.9 654.8,522.0 662.7,522.8 666.6,520.9 674.4,524.0 690.0,524.4 695.9,523.4 719.3,525.4 729.1,523.4 744.7,523.4 748.6,524.4 764.2,524.0 768.1,523.4 797.4,523.4 799.4,525.4 807.2,525.4 811.1,523.4 818.9,524.0 824.8,525.4 826.7,524.0 844.3,524.0 846.2,525.4 851.1,525.4 855.0,523.4 873.6,522.8 877.5,525.4 883.4,525.4 887.3,523.4 893.1,523.4 897.0,524.8 904.8,526.3 910.7,527.3 914.6,525.4 924.4,524.8 928.3,524.0 936.1,524.4 940.0,525.4 946.1,526.4 950.2,525.4 956.2,527.0 980.6,527.0 984.7,525.4 992.8,526.4 996.9,524.4 1000.9,524.4 1005.0,526.4 1011.1,527.0 1015.2,525.4 1021.2,525.4 1024.3,523.4 1027.3,527.0 1053.8,527.0 1059.8,525.4 1065.9,527.0 1072.0,525.8 1078.1,527.0 1094.4,526.4 1098.4,523.0 1102.5,526.4 1116.7,525.8 1122.8,526.4 1128.9,524.4 1133.0,525.0 1137.0,527.0 1151.2,526.4 1155.3,525.4 1161.4,517.3 1168.5,515.2 1171.6,531.5 1175.6,553.8 1180.7,570.1 1185.8,579.2 1193.9,585.9" fill="none" stroke="#8470ff" stroke-width="2.0" stroke-linejoin="round" />
<polyline points="191.0,709.9 244.7,709.9 248.6,711.9 254.5,714.8 272.0,714.8 275.9,709.9 278.3,698.2 279.5,655.2 280.8,596.7 282.2,557.6 283.8,543.9 286.7,530.2 289.6,524.4 297.4,522.8 303.3,521.5 307.2,517.6 313.0,516.2 318.9,517.6 326.7,519.5 332.6,522.0 338.4,520.9 352.1,520.1 354.1,518.1 365.8,518.5 377.5,519.5 381.4,521.5 393.1,520.9 397.0,518.5 402.9,519.5 416.6,521.5 428.3,521.5 440.0,522.0 447.8,519.5 457.6,523.4 461.5,520.5 475.2,520.9 481.0,518.9 488.8,522.0 506.4,522.0 510.3,523.4 518.1,522.8 527.9,519.5 539.6,519.5 549.4,523.4 565.0,522.0 574.8,518.9 584.5,521.5 592.3,520.1 598.2,520.9 604.1,524.0 608.0,522.0 623.6,522.0 627.5,524.0 643.1,524.0 647.0,522.0 654.8,523.4 662.7,523.4 666.6,522.0 674.4,525.4 680.2,525.4 690.0,524.0 697.8,526.3 701.7,524.4 729.1,524.0 740.8,524.0 746.6,526.7 752.5,527.9 759.3,522.8 766.2,526.3 775.9,526.7 778.9,527.9 785.7,525.4 803.3,526.3 815.0,524.8 822.8,526.7 834.5,527.3 838.4,526.0 846.2,526.7 851.1,526.0 854.1,530.2 858.0,527.3 881.4,527.3 885.3,528.3 893.1,528.3 897.0,526.0 904.8,527.3 910.7,528.7 914.6,526.7 924.4,527.3 930.2,530.2 934.1,528.3 940.0,528.7 948.1,529.1 952.2,527.4 958.3,529.1 980.6,529.1 983.7,532.5 988.8,532.5 991.8,529.1 1012.1,529.1 1014.1,532.5 1021.2,532.5 1023.3,529.1 1028.4,529.5 1030.4,533.1 1037.5,533.1 1039.5,529.1 1045.6,529.1 1047.7,531.5 1050.7,531.5 1052.7,533.5 1055.8,531.5 1058.8,529.1 1082.2,529.1 1084.2,532.5 1096.4,532.5 1098.4,533.9 1101.5,531.9 1104.5,529.5 1110.6,527.4 1118.8,526.4 1124.8,528.5 1139.1,529.1 1141.1,531.5 1145.2,531.5 1147.2,529.1 1157.3,528.5 1163.4,522.4 1168.5,517.3 1170.5,531.5 1173.6,553.8 1176.6,566.0 1179.7,574.2 1183.8,580.2 1193.9,585.9" fill="none" stroke="#00ffff" stroke-width="2.2" stroke-linejoin="round" />
</g>
<g clip-path="url(#cp4)">
<rect x="266.00" y="868.60" width="13.00" height="4.00" fill="#8c8840" />
<rect x="331.00" y="859.80" width="16.00" height="4.00" fill="#8c8840" />
<rect x="363.00" y="858.00" width="12.00" height="4.00" fill="#8c8840" />
<rect x="378.00" y="858.00" width="28.00" height="4.00" fill="#8c8840" />
<rect x="470.00" y="846.00" width="12.00" height="4.00" fill="#8c8840" />
<rect x="485.00" y="845.00" width="13.00" height="4.00" fill="#8c8840" />
<rect x="506.00" y="845.00" width="18.00" height="4.00" fill="#8c8840" />
<rect x="723.00" y="823.50" width="10.00" height="4.00" fill="#8c8840" />
<rect x="742.00" y="823.60" width="16.00" height="4.00" fill="#8c8840" />
<rect x="826.00" y="822.80" width="6.00" height="4.00" fill="#8c8840" />
<rect x="842.00" y="823.00" width="10.00" height="4.00" fill="#8c8840" />
<rect x="877.00" y="823.20" width="17.00" height="4.00" fill="#8c8840" />
<rect x="1094.00" y="845.60" width="32.00" height="4.00" fill="#8c8840" />
<rect x="1136.00" y="850.00" width="13.00" height="4.00" fill="#8c8840" />
<polyline points="254.1,936.7 254.5,934.8 256.4,912.3 258.4,898.6 261.3,886.9 263.2,877.2 266.2,871.3 270.1,869.3 278.9,869.0 281.8,865.4 287.7,863.5 299.4,862.5 303.3,863.5 308.2,870.3 311.1,867.8 317.0,866.4 322.8,863.1 328.7,863.1 332.6,860.6 336.5,860.6 340.4,862.5 346.2,863.1 361.9,863.1 365.8,860.6 371.6,857.6 377.5,856.1 380.4,857.6 387.3,857.2 389.2,856.1 393.1,857.6 404.8,857.6 410.7,855.7 416.6,852.7 421.4,850.8 425.4,852.7 432.2,851.4 440.0,852.7 444.9,855.7 451.7,849.8 457.6,851.8 464.4,853.7 470.3,846.9 479.1,848.8 488.8,844.0 494.7,848.8 502.5,841.6 508.4,846.9 514.2,844.0 522.0,846.9 527.9,841.6 533.8,843.6 539.6,842.0 546.4,838.5 552.3,842.4 559.1,840.4 567.0,842.4 572.8,842.0 578.7,835.2 584.5,839.1 591.4,836.1 596.2,839.1 609.9,839.1 616.8,833.8 622.6,839.7 631.4,834.2 647.0,833.8 650.9,831.3 666.6,831.3 671.4,829.3 686.1,829.3 690.0,827.9 690.0,828.7 717.3,828.7 723.2,825.4 729.1,824.0 734.9,826.0 744.7,825.4 754.5,824.8 760.3,820.5 767.1,817.0 772.0,819.5 781.8,819.5 785.7,821.5 791.6,819.5 797.4,821.5 803.3,819.5 818.9,819.5 824.8,823.4 830.6,825.4 836.1,816.6 842.3,824.8 848.2,824.8 854.1,820.9 861.9,820.5 867.3,816.6 873.6,821.5 881.4,824.4 893.1,824.4 898.0,820.5 903.9,820.5 909.7,827.4 916.6,826.4 922.4,823.4 927.3,825.4 935.1,830.3 940.0,827.4 940.0,826.7 943.0,823.6 951.2,829.1 968.4,829.1 973.5,832.4 980.6,829.1 990.8,833.8 997.9,832.8 1004.0,835.8 1011.1,832.8 1018.2,839.9 1024.3,833.8 1029.4,840.5 1035.5,837.2 1042.6,842.9 1047.7,838.9 1053.8,842.5 1060.9,838.9 1068.0,844.0 1074.1,842.5 1078.1,844.0 1091.3,844.0 1096.4,848.6 1107.6,848.6 1110.6,846.0 1116.7,848.6 1124.8,848.6 1130.5,844.0 1136.0,851.1 1148.2,851.1 1152.3,857.2 1155.3,863.2 1157.3,889.7 1159.4,910.0 1161.8,935.4 1162.4,940.4" fill="none" stroke="#f0e868" stroke-width="2.3" stroke-linejoin="round" />
</g>
<text transform="translate(190.95 927.70) scale(0.6592 1)" font-size="17.25" fill="#ffffff">5</text>
<text transform="translate(243.76 927.70) scale(0.6508 1)" font-size="17.25" fill="#ffffff" stroke="#fff" stroke-width="0.3">17:09:48.0</text>
<text transform="translate(343.36 927.70) scale(0.6515 1)" font-size="17.25" fill="#ffffff" stroke="#fff" stroke-width="0.3">17:09:48.5</text>
<text transform="translate(443.06 927.70) scale(0.6508 1)" font-size="17.25" fill="#ffffff" stroke="#fff" stroke-width="0.3">17:09:49.0</text>
<text transform="translate(544.56 927.70) scale(0.6515 1)" font-size="17.25" fill="#ffffff" stroke="#fff" stroke-width="0.3">17:09:49.5</text>
<text transform="translate(645.56 927.70) scale(0.6508 1)" font-size="17.25" fill="#ffffff" stroke="#fff" stroke-width="0.3">17:09:50.0</text>
<text transform="translate(745.76 927.70) scale(0.6515 1)" font-size="17.25" fill="#ffffff" stroke="#fff" stroke-width="0.3">17:09:50.5</text>
<text transform="translate(846.76 927.70) scale(0.6508 1)" font-size="17.25" fill="#ffffff" stroke="#fff" stroke-width="0.3">17:09:51.0</text>
<text transform="translate(946.26 927.70) scale(0.6515 1)" font-size="17.25" fill="#ffffff" stroke="#fff" stroke-width="0.3">17:09:51.5</text>
<text transform="translate(1045.76 927.70) scale(0.6508 1)" font-size="17.25" fill="#ffffff" stroke="#fff" stroke-width="0.3">17:09:52.0</text>
<rect x="5.50" y="283.00" width="1273.00" height="1.00" fill="#fff" />
<rect x="5.50" y="500.00" width="1273.00" height="1.00" fill="#fff" />
<rect x="5.50" y="718.00" width="1273.00" height="2.00" fill="#fff" />
<rect x="5.50" y="934.80" width="1273.00" height="2.00" fill="#fff" />
<rect x="190.00" y="67.00" width="1.00" height="869.00" fill="#fff" />
<rect x="1194.00" y="67.00" width="1.00" height="869.00" fill="#fff" />
<rect x="717.00" y="67.00" width="1.00" height="869.00" fill="#fff" />
<g clip-path="url(#cpl)">
<text transform="translate(38.07 81.80) scale(0.6745 1)" font-size="17.25" fill="#ff0000" stroke="#ff0000" stroke-width="0.35">RPM (rpm)</text>
<text transform="translate(34.24 117.00) scale(0.6992 1)" font-size="32.90" fill="#ff0000" stroke="#ff0000" stroke-width="0.5">4,882</text>
<text transform="translate(10.90 141.80) scale(0.6639 1)" font-size="17.25" fill="#7fff00" stroke="#7fff00" stroke-width="0.35">Accel Pedall (%)</text>
<text transform="translate(47.36 177.00) scale(0.7027 1)" font-size="32.90" fill="#7fff00" stroke="#7fff00" stroke-width="0.5">99.6</text>
<text transform="translate(36.64 203.00) scale(0.6737 1)" font-size="17.25" fill="#ffffff" stroke="#ffffff" stroke-width="0.35">Voltage (V)</text>
<text transform="translate(34.99 235.80) scale(0.6920 1)" font-size="32.90" fill="#ffffff" stroke="#ffffff" stroke-width="0.5">14.56</text>
<text transform="translate(62.04 299.30) scale(0.6985 1)" font-size="17.25" fill="#ff0000" stroke="#ff0000" stroke-width="0.35">KR (°)</text>
<text transform="translate(60.12 334.70) scale(0.7155 1)" font-size="32.90" fill="#ff0000" stroke="#ff0000" stroke-width="0.5">2.8</text>
<text transform="translate(125.67 299.30) scale(0.6707 1)" font-size="17.25" fill="#ffffff" stroke="#ffffff" stroke-width="0.35">EQ Cmd (λ)</text>
<text transform="translate(126.89 334.70) scale(0.6899 1)" font-size="32.90" fill="#ffffff" stroke="#ffffff" stroke-width="0.5">0.787</text>
<text transform="translate(73.00 359.70) scale(0.6466 1)" font-size="17.25" fill="#00ffff" stroke="#00ffff" stroke-width="0.35">AFR</text>
<text transform="translate(35.26 393.60) scale(0.7053 1)" font-size="32.90" fill="#00ffff" stroke="#00ffff" stroke-width="0.5">11.63</text>
<text transform="translate(140.88 359.70) scale(0.6717 1)" font-size="17.25" fill="#ffffff" stroke="#ffffff" stroke-width="0.35">Spark (°)</text>
<text transform="translate(152.98 393.60) scale(0.6958 1)" font-size="32.90" fill="#ffffff" stroke="#ffffff" stroke-width="0.5">5.0</text>
<text transform="translate(5.36 419.60) scale(0.6785 1)" font-size="17.25" fill="#ffffff" stroke="#ffffff" stroke-width="0.35">FR COMMANDE</text>
<text transform="translate(35.26 454.70) scale(0.7053 1)" font-size="32.90" fill="#ffffff" stroke="#ffffff" stroke-width="0.5">11.56</text>
<text transform="translate(29.19 515.80) scale(0.6633 1)" font-size="17.25" fill="#8470ff" stroke="#8470ff" stroke-width="0.35">O2 B1S1 (V)</text>
<text transform="translate(35.09 550.60) scale(0.6887 1)" font-size="32.90" fill="#8470ff" stroke="#8470ff" stroke-width="0.5">0.892</text>
<text transform="translate(29.19 576.60) scale(0.6633 1)" font-size="17.25" fill="#00ffff" stroke="#00ffff" stroke-width="0.35">O2 B2S1 (V)</text>
<text transform="translate(35.10 611.40) scale(0.6858 1)" font-size="32.90" fill="#00ffff" stroke="#00ffff" stroke-width="0.5">0.898</text>
<text transform="translate(41.14 638.30) scale(0.6838 1)" font-size="17.25" fill="#8b008b" stroke="#8b008b" stroke-width="0.35">Inj DC (%)</text>
<text transform="translate(47.48 670.30) scale(0.7027 1)" font-size="32.90" fill="#8b008b" stroke="#8b008b" stroke-width="0.5">35.9</text>
<text transform="translate(28.25 734.70) scale(0.6893 1)" font-size="17.25" fill="#f0e868" stroke="#f0e868" stroke-width="0.35">BOOST (psi)</text>
<text transform="translate(81.46 769.40) scale(0.7049 1)" font-size="32.90" fill="#f0e868" stroke="#f0e868" stroke-width="0.5">8</text>
</g>
<text transform="translate(1196.21 81.40) scale(0.6867 1)" font-size="17.25" fill="#ff0000" stroke="#ff0000" stroke-width="0.35">6,000</text>
<text transform="translate(1196.33 180.50) scale(0.6838 1)" font-size="17.25" fill="#ff0000" stroke="#ff0000" stroke-width="0.35">3,000</text>
<text transform="translate(1196.84 279.00) scale(0.6644 1)" font-size="17.25" fill="#ff0000" stroke="#ff0000" stroke-width="0.35">0</text>
<text transform="translate(1231.71 81.40) scale(0.6078 1)" font-size="17.25" fill="#7fff00" stroke="#7fff00" stroke-width="0.35">100</text>
<text transform="translate(1231.06 180.50) scale(0.6331 1)" font-size="17.25" fill="#7fff00" stroke="#7fff00" stroke-width="0.35">50</text>
<text transform="translate(1230.83 279.00) scale(0.6886 1)" font-size="17.25" fill="#7fff00" stroke="#7fff00" stroke-width="0.35">0</text>
<text transform="translate(1254.68 81.40) scale(0.6351 1)" font-size="17.25" fill="#ffffff" stroke="#ffffff" stroke-width="0.35">15.0</text>
<text transform="translate(1254.68 180.50) scale(0.6369 1)" font-size="17.25" fill="#ffffff" stroke="#ffffff" stroke-width="0.35">12.5</text>
<text transform="translate(1254.68 279.00) scale(0.6351 1)" font-size="17.25" fill="#ffffff" stroke="#ffffff" stroke-width="0.35">10.0</text>
<text transform="translate(1197.09 299.30) scale(0.7074 1)" font-size="17.25" fill="#ff0000" stroke="#ff0000" stroke-width="0.35">10</text>
<text transform="translate(1223.66 299.30) scale(0.6279 1)" font-size="17.25" fill="#00ffff" stroke="#00ffff" stroke-width="0.35">20</text>
<text transform="translate(1239.45 299.30) scale(0.6392 1)" font-size="17.25" fill="#ffffff" stroke="#ffffff" stroke-width="0.35">20</text>
<text transform="translate(1259.00 299.30) scale(0.6185 1)" font-size="17.25" fill="#ffffff" stroke="#ffffff" stroke-width="0.35">1.5</text>
<text transform="translate(1196.76 317.80) scale(0.6964 1)" font-size="17.25" fill="#ffffff" stroke="#ffffff" stroke-width="0.35">45.0</text>
<text transform="translate(1196.82 389.80) scale(0.6958 1)" font-size="17.25" fill="#ff0000" stroke="#ff0000" stroke-width="0.35">5</text>
<text transform="translate(1225.94 389.80) scale(0.5070 1)" font-size="17.25" fill="#00ffff" stroke="#00ffff" stroke-width="0.35">15</text>
<text transform="translate(1241.30 389.80) scale(0.5420 1)" font-size="17.25" fill="#ffffff" stroke="#ffffff" stroke-width="0.35">15</text>
<text transform="translate(1259.00 389.80) scale(0.6161 1)" font-size="17.25" fill="#ffffff" stroke="#ffffff" stroke-width="0.35">1.0</text>
<text transform="translate(1196.39 407.40) scale(0.7096 1)" font-size="17.25" fill="#ffffff" stroke="#ffffff" stroke-width="0.35">22.5</text>
<text transform="translate(1196.83 478.60) scale(0.6886 1)" font-size="17.25" fill="#ff0000" stroke="#ff0000" stroke-width="0.35">0</text>
<text transform="translate(1225.95 478.60) scale(0.5045 1)" font-size="17.25" fill="#00ffff" stroke="#00ffff" stroke-width="0.35">10</text>
<text transform="translate(1241.30 478.60) scale(0.5392 1)" font-size="17.25" fill="#ffffff" stroke="#ffffff" stroke-width="0.35">10</text>
<text transform="translate(1257.22 478.60) scale(0.6949 1)" font-size="17.25" fill="#ffffff" stroke="#ffffff" stroke-width="0.35">0.5</text>
<text transform="translate(1197.00 496.00) scale(0.7275 1)" font-size="17.25" fill="#ffffff" stroke="#ffffff" stroke-width="0.35">0.0</text>
<text transform="translate(1198.12 515.70) scale(0.6795 1)" font-size="17.25" fill="#8470ff" stroke="#8470ff" stroke-width="0.35">1.0</text>
<text transform="translate(1219.77 515.70) scale(0.5662 1)" font-size="17.25" fill="#00ffff" stroke="#00ffff" stroke-width="0.35">1.0</text>
<text transform="translate(1238.20 515.70) scale(0.6190 1)" font-size="17.25" fill="#8b008b" stroke="#8b008b" stroke-width="0.35">100</text>
<text transform="translate(1197.00 615.50) scale(0.7303 1)" font-size="17.25" fill="#8470ff" stroke="#8470ff" stroke-width="0.35">0.5</text>
<text transform="translate(1217.75 615.50) scale(0.6551 1)" font-size="17.25" fill="#00ffff" stroke="#00ffff" stroke-width="0.35">0.5</text>
<text transform="translate(1236.53 615.50) scale(0.6835 1)" font-size="17.25" fill="#8b008b" stroke="#8b008b" stroke-width="0.35">50</text>
<text transform="translate(1197.00 713.30) scale(0.7275 1)" font-size="17.25" fill="#8470ff" stroke="#8470ff" stroke-width="0.35">0.0</text>
<text transform="translate(1217.75 713.30) scale(0.6526 1)" font-size="17.25" fill="#00ffff" stroke="#00ffff" stroke-width="0.35">0.0</text>
<text transform="translate(1236.52 713.30) scale(0.7006 1)" font-size="17.25" fill="#8b008b" stroke="#8b008b" stroke-width="0.35">0</text>
<text transform="translate(1197.10 734.50) scale(0.6952 1)" font-size="17.25" fill="#f0e868" stroke="#f0e868" stroke-width="0.35">15.0</text>
<text transform="translate(1196.87 832.70) scale(0.7359 1)" font-size="17.25" fill="#f0e868" stroke="#f0e868" stroke-width="0.35">7.5</text>
<text transform="translate(1197.00 932.50) scale(0.7275 1)" font-size="17.25" fill="#f0e868" stroke="#f0e868" stroke-width="0.35">0.0</text>
</g>
<g id="overview"><rect x="0.00" y="936.00" width="1280.00" height="40.00" fill="#dcdcdc" />
<rect x="4.00" y="936.80" width="1276.00" height="3.10" fill="#a0a0a0" />
<rect x="0.00" y="974.20" width="1279.00" height="1.70" fill="#a2a2a2" />
<polyline points="2.0,968.0 33.8,968.0 34.5,969.0 161.2,969.0 162.5,968.0 281.2,968.0 282.5,969.2 284.5,968.0 320.0,968.0 332.5,968.8 348.8,969.2 350.0,968.0 355.0,968.8 357.5,966.2 401.2,966.2 406.2,968.8 410.0,971.2 425.0,971.2 430.0,969.5 435.0,966.2 435.5,963.8 438.8,960.0 442.5,956.2 445.0,958.8 446.2,961.2 448.8,962.5 450.0,968.8 452.0,962.5 456.2,959.5 460.0,957.5 463.8,956.2 466.2,958.8 468.8,960.8 475.0,963.0 478.8,964.5 491.2,966.2 492.5,968.8 495.0,967.5 496.2,962.5 507.5,963.0 508.8,967.5 511.2,969.2 513.0,962.5 520.0,960.0 532.5,958.0 536.2,953.8 538.2,945.5 540.5,953.8 543.8,960.0 548.8,961.8 560.0,963.2 562.5,964.5 570.0,967.5 577.5,970.0 578.8,971.2 595.0,971.2 601.2,967.5 603.8,961.2 608.8,955.8 612.5,960.8 617.5,958.8 621.2,955.0 623.8,950.0 626.2,949.5 628.8,953.8 632.5,957.5 636.2,959.2 640.0,959.2 645.0,953.8 650.0,957.0 655.0,957.0 658.8,952.5 661.8,944.5 665.0,955.0 668.0,951.2 672.0,951.5 673.8,953.8 681.2,961.2 686.2,960.0 693.8,961.8 703.8,961.8 711.2,958.8 715.0,955.0 717.5,950.0 720.0,958.0 725.0,958.8 727.5,962.0 737.5,964.5 747.5,964.5 748.0,963.8 755.0,963.8 756.2,965.0 765.0,967.5 772.5,970.8 777.5,972.0 785.0,970.8 793.8,967.0 800.0,968.8 803.8,971.2 825.0,971.2 830.0,972.0 835.0,971.2 838.8,968.8 842.5,971.2 846.2,970.0 848.8,966.2 852.5,957.5 855.5,950.5 858.0,958.0 862.5,955.0 866.2,945.5 868.8,952.5 871.2,960.0 880.0,962.0 887.5,964.5 895.0,963.8 898.8,963.2 900.0,967.5 920.0,968.8 925.0,970.5 930.0,968.0 935.0,968.8 938.8,970.0 941.2,966.2 947.5,963.8 952.5,962.0 957.5,962.5 960.0,963.0 960.0,965.0 970.0,963.8 1006.2,963.8 1007.5,966.2 1011.2,961.2 1025.0,960.8 1035.0,956.2 1037.5,955.0 1043.8,947.0 1050.5,947.5 1053.8,950.0 1056.2,953.0 1065.0,956.2 1073.8,959.2 1080.0,961.2 1081.2,964.5 1096.2,967.0 1110.0,968.2 1117.5,967.5 1120.0,963.2 1122.5,965.0 1126.2,968.0 1132.5,971.2 1145.0,971.2 1150.0,969.5 1155.0,966.2 1157.5,960.0 1161.2,956.2 1163.8,948.8 1167.0,960.0 1171.2,952.5 1173.2,945.5 1175.5,956.2 1180.0,957.5 1187.5,957.0 1191.2,952.5 1195.0,946.2 1198.0,945.5 1200.0,950.0 1202.0,958.8 1206.2,960.8 1220.0,963.8 1222.5,967.5 1225.0,970.0 1242.5,972.0 1260.0,972.0 1263.8,971.2 1266.2,972.5 1275.0,971.2 1280.0,970.8" fill="none" stroke="#ff0000" stroke-width="1.35" stroke-linejoin="round" />
<rect x="0.00" y="964.25" width="2.00" height="3.50" fill="#ff0000" />
<rect x="357.50" y="964.50" width="43.75" height="3.25" fill="#ff0000" />
<rect x="478.75" y="964.25" width="12.50" height="3.25" fill="#ff0000" />
<rect x="521.25" y="958.75" width="7.50" height="2.00" fill="#ff0000" />
<rect x="562.50" y="964.25" width="4.50" height="3.50" fill="#ff0000" />
<rect x="636.25" y="958.25" width="3.75" height="2.50" fill="#ff0000" />
<rect x="434.00" y="963.75" width="2.00" height="4.00" fill="#ff0000" />
<rect x="645.00" y="952.00" width="2.50" height="2.50" fill="#ff0000" />
<rect x="668.00" y="950.00" width="4.00" height="3.00" fill="#ff0000" />
<rect x="738.25" y="964.25" width="8.75" height="3.50" fill="#ff0000" />
<rect x="756.25" y="964.25" width="6.25" height="3.50" fill="#ff0000" />
<rect x="794.25" y="964.25" width="5.00" height="3.50" fill="#ff0000" />
<rect x="888.00" y="964.25" width="6.50" height="3.50" fill="#ff0000" />
<rect x="941.75" y="964.25" width="5.00" height="3.50" fill="#ff0000" />
<rect x="958.00" y="963.75" width="2.00" height="4.00" fill="#ff0000" />
<rect x="960.00" y="964.25" width="9.50" height="3.50" fill="#ff0000" />
<rect x="1006.75" y="963.75" width="3.25" height="4.00" fill="#ff0000" />
<rect x="1026.25" y="958.25" width="3.75" height="2.50" fill="#ff0000" />
<rect x="1055.75" y="951.25" width="3.00" height="3.25" fill="#ff0000" />
<rect x="1073.75" y="958.25" width="3.75" height="2.50" fill="#ff0000" />
<rect x="1081.75" y="964.25" width="13.25" height="3.50" fill="#ff0000" />
<rect x="1122.00" y="964.25" width="3.00" height="3.50" fill="#ff0000" />
<rect x="1221.00" y="963.75" width="2.00" height="3.25" fill="#ff0000" />
<rect x="1038.00" y="941.00" width="12.00" height="32.50" fill="#e6eef6" stroke="#000" stroke-width="1.6"/>
<rect x="1043.30" y="946.00" width="1.20" height="24.00" fill="#22b4ee" />
<polyline points="1041.0,948.5 1043.0,946.0 1045.0,945.5" fill="none" stroke="#ff0000" stroke-width="1.2" stroke-linejoin="round" /></g>
<g id="status"><rect x="0.00" y="975.90" width="1280.00" height="30.80" fill="#fff" />
<rect x="0.00" y="977.80" width="1278.00" height="26.00" fill="#f0edec" />
<text transform="translate(-0.60 997.60) scale(0.6907 1)" font-size="17.39" fill="#0a0a28">10/18/2017 5:03:38 PM</text>
<text transform="translate(161.22 997.60) scale(0.7038 1)" font-size="17.39" fill="#0a0a28">Duration: 7m 31s</text>
<text transform="translate(337.63 997.60) scale(0.7186 1)" font-size="17.39" fill="#0a0a28">Zoom: 5s</text>
<text transform="translate(452.97 997.60) scale(0.6627 1)" font-size="17.39" fill="#0a0a28">Time: 05:09:50.214, 00:06:11.380</text></g>
<g id="taskbar"><rect x="0.00" y="1006.60" width="1280.00" height="57.00" fill="url(#tk)" />
<rect x="0.00" y="1006.60" width="1280.00" height="1.10" fill="#59626d" />
<rect x="9.20" y="1008.50" width="60.60" height="53.80" fill="url(#btn)" rx="2.5" stroke="#9ea2a8" stroke-width="1.1"/>
<path d="M10 1009.2 L69 1009.2 L69 1016 Q40 1020 10.2 1046 Z" fill="#fff" opacity="0.28"/>
<rect x="526.20" y="1008.50" width="59.60" height="53.80" fill="url(#btn2)" rx="2.5" stroke="#d0d2d4" stroke-width="1.1"/>
<path d="M527 1009.2 L585 1009.2 L585 1018 Q556 1022 527 1047 Z" fill="#fff" opacity="0.22"/>
<rect x="591.20" y="1008.50" width="59.40" height="53.80" fill="url(#btn3)" rx="2.5" stroke="#a0a4a8" stroke-width="1.1"/>
<path d="M592 1009.2 L650 1009.2 L650 1017 Q620 1021 592 1046 Z" fill="#fff" opacity="0.2"/>
<g transform="translate(40 1035) scale(0.75 1.015)">
<circle r="20" fill="#e0493a"/>
<path d="M0 0 L-17.3 -10 A20 20 0 0 0 8.5 18.1 Z" fill="#1da462"/>
<path d="M0 0 L8.5 18.1 A20 20 0 0 0 18.8 -6.8 L0 -6.8 Z" fill="#ffcd40"/>
<circle r="8.6" fill="#fff"/><circle r="6.2" fill="#4688f1"/>
</g>
<rect x="40.00" y="1038.00" width="16.00" height="20.80" fill="#dcdcdc" />
<ellipse cx="48.3" cy="1044.6" rx="2.7" ry="3.5" fill="#a6a6a6"/><rect x="47.2" y="1047" width="2.2" height="3.4" fill="#a6a6a6"/><ellipse cx="48.3" cy="1052.6" rx="4.8" ry="2.7" fill="#a6a6a6"/>
<path d="M89 1019 L106.9 1014 L106.9 1055.9 L89 1051.5 Z" fill="#0f6fc6"/>
<rect x="106.90" y="1024.00" width="14.10" height="23.80" fill="#0f6fc6" />
<rect x="108.00" y="1026.00" width="11.20" height="19.00" fill="#fff" />
<path d="M108 1026 L113.6 1036.5 L119.2 1026" fill="#cfe2f6" stroke="#0f6fc6" stroke-width="1.6"/>
<text transform="translate(92.41 1042.80) scale(0.6751 1)" font-size="21.74" fill="#fff" font-weight="bold">O</text>
<text transform="translate(151.36 1040.80) scale(0.6257 1)" font-size="15.65" fill="#22b000" font-weight="bold">Excede</text>
<path d="M221.6 1027.5 L224.5 1024.8 L230.0 1024.8 L230.0 1021 L232.0 1021 L232.0 1024.8 L237.0 1024.8 L239.5 1031 L243.0 1031 L243.0 1029 L247.0 1029 L247.0 1044 L243.0 1044 L243.0 1041.5 L240.5 1041.5 L239.5 1045.5 L237.0 1048.5 L227.0 1048.5 L225.0 1042.5 L221.6 1042.5 Z" fill="#0000f0" stroke="#2a1c14" stroke-width="1"/>
<rect x="226.50" y="1020.20" width="9.00" height="1.40" fill="#2a1c14" />
<rect x="217.20" y="1026.00" width="1.00" height="19.00" fill="#2a1c14" />
<rect x="218.00" y="1034.50" width="3.60" height="1.00" fill="#2a1c14" />
<path d="M227.6 1031.5 L230.8 1030.2 L232 1033.5 L238.2 1043.5 L236.5 1044.6 L230.4 1035 L228 1035.4 Z" fill="#d6d6c8"/>
<path d="M285.6 1027.5 L288.5 1024.8 L294.0 1024.8 L294.0 1021 L296.0 1021 L296.0 1024.8 L301.0 1024.8 L303.5 1031 L307.0 1031 L307.0 1029 L311.0 1029 L311.0 1044 L307.0 1044 L307.0 1041.5 L304.5 1041.5 L303.5 1045.5 L301.0 1048.5 L291.0 1048.5 L289.0 1042.5 L285.6 1042.5 Z" fill="#4262ba" stroke="#3a3232" stroke-width="1"/>
<rect x="290.50" y="1020.20" width="9.00" height="1.40" fill="#3a3232" />
<rect x="281.20" y="1026.00" width="1.00" height="19.00" fill="#3a3232" />
<rect x="282.00" y="1034.50" width="3.60" height="1.00" fill="#3a3232" />
<text transform="translate(285.74 1041.40) scale(0.7361 1)" font-size="10.43" fill="#fff" font-weight="bold">1708</text>
<rect x="346.90" y="1012.90" width="29.40" height="26.00" fill="#cfcff4" stroke="#8888b8" stroke-width="0.8"/>
<rect x="352.50" y="1016.20" width="21.40" height="20.50" fill="#000" />
<path d="M370.6 1018.8 L362 1018.8 Q355.8 1021 355.8 1027.5 Q355.8 1034 362 1035.9 L370.6 1035.9 L370.6 1031 L364 1031 Q362 1027.5 364 1024 L370.6 1024 Z" fill="#f4f4f4"/>
<rect x="345.40" y="1039.60" width="32.60" height="9.00" fill="#e8e8f0" stroke="#8888a8" stroke-width="0.7"/>
<rect x="356.00" y="1042.60" width="18.00" height="2.20" fill="#303038" />
<rect x="352.00" y="1048.60" width="26.80" height="10.20" fill="#9c9cdc" />
<rect x="353.50" y="1050.00" width="23.80" height="5.60" fill="#e4e4f4" />
<rect x="354.40" y="1050.60" width="1.40" height="4.40" fill="#6c6c9c" />
<rect x="357.30" y="1050.60" width="1.40" height="4.40" fill="#6c6c9c" />
<rect x="360.20" y="1050.60" width="1.40" height="4.40" fill="#6c6c9c" />
<rect x="363.10" y="1050.60" width="1.40" height="4.40" fill="#6c6c9c" />
<rect x="366.00" y="1050.60" width="1.40" height="4.40" fill="#6c6c9c" />
<rect x="368.90" y="1050.60" width="1.40" height="4.40" fill="#6c6c9c" />
<rect x="371.80" y="1050.60" width="1.40" height="4.40" fill="#6c6c9c" />
<rect x="374.70" y="1050.60" width="1.40" height="4.40" fill="#6c6c9c" />
<g transform="translate(428.2 1035.5) scale(0.73 1)">
<path d="M18.8 2.5 A18.8 19 0 1 0 17 10.5 L8.8 10.5 A10.5 10.2 0 0 1 -9.6 2.5 Z M-9.2 -4.4 A9.4 6.4 0 0 1 9.2 -4.4 Z" fill="#2aa4ea" fill-rule="evenodd"/>
<path d="M-21 17 Q-28 4 -8 -12 Q8 -24 15 -21.5 Q18 -20 15 -13" fill="none" stroke="#f4c01c" stroke-width="3.6" stroke-linecap="round"/>
</g>
<ellipse cx="491.6" cy="1035" rx="15.7" ry="21" fill="#1ed760"/>
<path d="M481.5 1028.5 Q491.5 1023.6 502.4 1030.6" fill="none" stroke="#191414" stroke-width="3.3" stroke-linecap="round"/>
<path d="M482.8 1035.7 Q491.5 1031.6 500.6 1037.4" fill="none" stroke="#191414" stroke-width="2.6" stroke-linecap="round"/>
<path d="M483.8 1042.4 Q491.5 1039 499.2 1043.8" fill="none" stroke="#191414" stroke-width="2" stroke-linecap="round"/>
<path d="M555.1 1014.4 L571.4 1014.1 L562.5 1023.3 L568.4 1023.3 L558 1034.4 L563.2 1034.4 L541.7 1055.2 L550.6 1039.6 L544.7 1039.6 L552.9 1027.8 L548.4 1027.8 Z" fill="url(#bolt)" stroke="#c88a10" stroke-width="1"/>
<path d="M556.5 1015.8 L567.5 1015.6 L559 1024.4 L563.5 1024.6 L553.5 1035.4 L557 1036.2 L548 1046 L553 1038.6 L548 1038.4 L555.3 1027 L551.2 1026.6 Z" fill="#ffe978" opacity="0.75"/>
<path d="M618 1021.8 Q633.5 1021.8 633.7 1036 Q633.5 1051.5 618 1051.5 Q611 1051.5 611.5 1047.5 Q612 1044.5 608 1045.5 Q603.6 1046 604 1037 Q605 1022 618 1021.8 Z" fill="#a6d2ee" stroke="#d8ecf8" stroke-width="0.8"/>
<ellipse cx="609.3" cy="1038" rx="2.5" ry="3.2" fill="#e23c34"/>
<rect x="612.40" y="1028.20" width="5.00" height="5.80" fill="#54b840" rx="1"/>
<ellipse cx="621.6" cy="1027" rx="2.8" ry="3" fill="#f6a61c"/>
<ellipse cx="618.2" cy="1039.8" rx="2.2" ry="3" fill="#182028"/>
<path d="M628.2 1026 L630.2 1027 L621.2 1058 L620.2 1057.6 Z" fill="#f08a1c" stroke="#f6a84a" stroke-width="0.8"/>
<path d="M629 1014.5 L633.5 1016.5 L636.5 1019.5 L633 1021.5 L631.5 1024.5 L628.6 1027 L627.5 1025 Z" fill="#d6a468"/>
<path d="M1094.4 1039.9 L1102.6 1039.9 L1098.5 1034 Z" fill="#e8e8f0"/>
<rect x="1117.60" y="1027.00" width="1.30" height="21.00" fill="#f4f4f4" />
<path d="M1119 1028 L1126.5 1028 L1126.5 1030.5 L1130 1030.5 L1130 1036.4 L1119 1036.4 Z" fill="#f0f0f0"/>
<ellipse cx="1128.4" cy="1041.3" rx="4.5" ry="7.3" fill="#e42a20"/>
<path d="M1126 1037.6 L1130.8 1045 M1130.8 1037.6 L1126 1045" stroke="#fff" stroke-width="1.7"/>
<rect x="1145.20" y="1028.20" width="8.80" height="19.40" fill="none" rx="1.6" stroke="#f4f4f4" stroke-width="1.5"/>
<rect x="1147.60" y="1026.40" width="4.00" height="2.00" fill="#f4f4f4" />
<rect x="1147.20" y="1034.20" width="4.80" height="10.60" fill="#f4f4f4" />
<path d="M1167.6 1033 L1170 1033 L1173.6 1026.8 L1173.6 1047.2 L1170 1041 L1167.6 1041 Z" fill="#f0f0f0"/>
<path d="M1176 1033.4 Q1178 1037 1176 1040.6" fill="none" stroke="#d8d8d8" stroke-width="1.1"/>
<path d="M1178.4 1030 Q1182 1037 1178.4 1044" fill="none" stroke="#d8d8d8" stroke-width="1.1"/>
<text transform="translate(1204.79 1029.80) scale(0.7906 1)" font-size="15.36" fill="#f4f4f4">7:08 PM</text>
<text transform="translate(1195.85 1054.80) scale(0.7156 1)" font-size="17.68" fill="#f4f4f4">11/10/2017</text>
<rect x="1266.50" y="1008.00" width="14.00" height="54.50" fill="#1c2026" stroke="#5a6068" stroke-width="1"/>
<path d="M1267 1008.5 L1280 1008.5 L1280 1016 Q1272 1020 1267 1030 Z" fill="#fff" opacity="0.1"/></g>
</svg>
</body></html>
